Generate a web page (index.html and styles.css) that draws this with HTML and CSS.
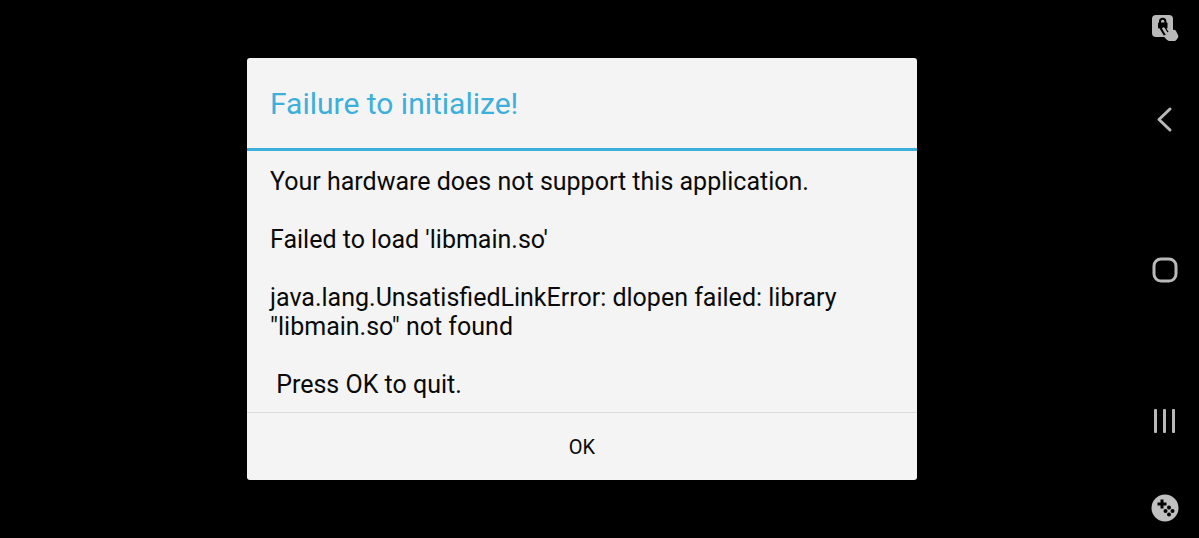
FILE: index.html
```html
<!DOCTYPE html>
<html lang="en">
<head>
  <meta charset="UTF-8">
  <meta name="viewport" content="width=device-width, initial-scale=1">
  <title>Failure to initialize!</title>
  <link rel="stylesheet" href="styles.css">
</head>
<body>
  <main class="screen">
    <div class="dialog" role="alertdialog" aria-labelledby="title" aria-describedby="message">
      <h1 class="dialog-title" id="title">Failure to initialize!</h1>
      <div class="dialog-message" id="message">
        <p>Your hardware does not support this application.</p>
        <p>Failed to load 'libmain.so'</p>
        <p>java.lang.UnsatisfiedLinkError: dlopen failed: library "libmain.so" not found</p>
        <p>&nbsp;Press OK to quit.</p>
      </div>
      <button class="dialog-button" type="button">OK</button>
    </div>
  </main>

  <nav class="navbar">
    <button class="nav-small" type="button" aria-label="Touch lock">
      <svg width="30" height="30" viewBox="0 0 30 30">
        <rect x="2" y="2" width="21" height="22" rx="4" fill="#b9b9b9"/>
        <path d="M10 10V8.500a2.700 2.700 0 0 1 5.400 0V10" fill="none" stroke="#000" stroke-width="2"/>
        <rect x="8" y="9.500" width="9.500" height="6" rx="1" fill="#000"/>
        <path d="M13 15.500L17 22" stroke="#000" stroke-width="6" stroke-linecap="round"/>
        <path d="M13.500 15.500L18 23" stroke="#b9b9b9" stroke-width="2.600" stroke-linecap="round"/>
        <path d="M17 19.500l6-2.500c1.300-.5 2.300-.2 3 1l2 4c.5 1 .4 2-.2 3l-1.300 1.800c-.6.9-1.400 1.200-2.500 1.200h-4c-1.500 0-2.600-.6-3.500-1.500l-2.500-2.800c-.7-1 .3-1.900 1.300-1.600l3 .9z" fill="#b9b9b9"/>
      </svg>
    </button>
    <div class="nav-main">
      <button type="button" aria-label="Back">
        <svg width="30" height="30" viewBox="0 0 30 30" fill="none" stroke="#b9b9b9" stroke-width="3" stroke-linecap="round" stroke-linejoin="round">
          <path d="M20 5L9 15.500 20 26"/>
        </svg>
      </button>
      <button type="button" aria-label="Home">
        <svg width="30" height="30" viewBox="0 0 30 30" fill="none" stroke="#b9b9b9" stroke-width="3">
          <rect x="4" y="4" width="22" height="22" rx="7"/>
        </svg>
      </button>
      <button type="button" aria-label="Recent apps">
        <svg width="30" height="30" viewBox="0 0 30 30" fill="#b9b9b9">
          <rect x="4" y="3" width="3" height="24" rx="1"/>
          <rect x="13" y="3" width="3" height="24" rx="1"/>
          <rect x="22" y="3" width="3" height="24" rx="1"/>
        </svg>
      </button>
    </div>
    <button class="nav-small" type="button" aria-label="Game tools">
      <svg width="30" height="30" viewBox="0 0 30 30">
        <circle cx="15" cy="15" r="13.500" fill="#c0c0c0"/>
        <path d="M12 6.500v9M7.500 11h9" stroke="#000" stroke-width="3"/>
        <circle cx="19" cy="14.500" r="2"/>
        <circle cx="15.500" cy="18" r="2"/>
        <circle cx="22.500" cy="18" r="2"/>
        <circle cx="19" cy="21.500" r="2"/>
      </svg>
    </button>
  </nav>
</body>
</html>
```

FILE: styles.css
```css
* {
  margin: 0;
  padding: 0;
  box-sizing: border-box;
}

body {
  font-family: Roboto, sans-serif;
  background: #000;
  min-height: 100vh;
  display: flex;
}

button {
  border: none;
  background: none;
  font-family: inherit;
  cursor: pointer;
}

.screen {
  flex: 1;
  padding-left: 33px;
  display: flex;
  align-items: center;
  justify-content: center;
}

.dialog {
  width: 90%;
  max-width: 670px;
  background: #f4f4f4;
  border-radius: 3px;
  color: #0a0a0a;
  overflow: hidden;
}

.dialog-title {
  padding: 28px 23px 26px;
  border-bottom: 3px solid #3cb0da;
  color: #3cb0da;
  font-size: 30px;
  font-weight: 400;
  line-height: 36px;
}

.dialog-message {
  padding: 16px 23px 13px;
  display: flex;
  flex-direction: column;
  gap: 29px;
  font-size: 25px;
  line-height: 29px;
}

.dialog-button {
  display: block;
  width: 100%;
  height: 68px;
  border-top: 1px solid #dcdcdc;
  color: #0a0a0a;
  font-size: 20px;
}

.navbar {
  width: 68px;
  padding: 4px 0 6px;
  display: flex;
  flex-direction: column;
}

.navbar button {
  display: flex;
  align-items: center;
  justify-content: center;
}

.nav-small {
  height: 48px;
}

.nav-main {
  flex: 1;
  padding-top: 4px;
  display: flex;
  flex-direction: column;
  justify-content: space-between;
}

.nav-main button {
  height: 126px;
}
```
